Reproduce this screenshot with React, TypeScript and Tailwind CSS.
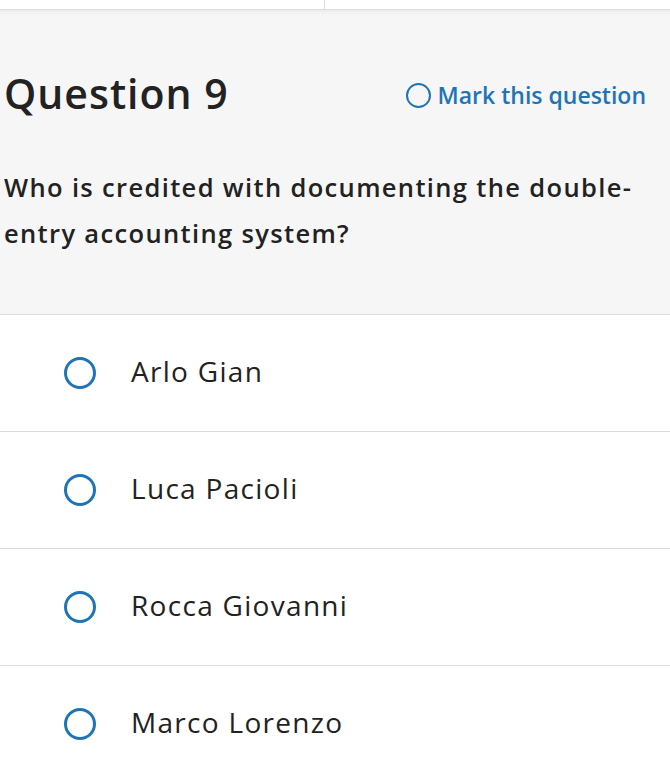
import React from "react";

const options = ["Arlo Gian", "Luca Pacioli", "Rocca Giovanni", "Marco Lorenzo"];

export default function App() {
  return (
    <div className="w-[670px] h-[779px] overflow-hidden bg-white text-[#222222]" style={{ fontFamily: "'Open Sans', Lato, sans-serif" }}>
      <div className="flex h-[9px] bg-white">
        <div className="w-[325px] border-r border-[#dcdcdc]" />
        <div className="flex-1" />
      </div>
      <div className="h-[1px] bg-[#dcdcdc]" />
      <div className="h-[304px] bg-[#f6f6f6] bg-gradient-to-b from-[#ececec] to-[#f6f6f6] bg-no-repeat bg-[length:100%_5px]">
        <div className="pl-[4px] pr-[24px] pt-[58px] flex items-center justify-between">
          <h1 className="text-[41px] font-semibold leading-[50px] tracking-[1px]">Question 9</h1>
          <button className="flex items-center gap-[7px] text-[#1f74b6] text-[23px] font-semibold leading-none mt-[4px]">
            <span className="w-[25px] h-[25px] rounded-full border-[2.5px] border-[#1f74b6]" />
            <span>Mark this question</span>
          </button>
        </div>
        <p className="pl-[4px] pr-[20px] pt-[46px] text-[25.5px] font-semibold leading-[46px] tracking-[1.35px]">
          Who is credited with documenting the double-entry accounting system?
        </p>
      </div>
      <div className="border-t border-[#dcdcdc]">
        {options.map((o) => (
          <div key={o} className="h-[117px] border-b border-[#dcdcdc] flex items-center">
            <span className="ml-[64px] w-[32px] h-[32px] rounded-full border-[3px] border-[#1f74b6]" />
            <span className="ml-[35px] text-[28px] leading-none tracking-[1.3px] -mt-[4px]">{o}</span>
          </div>
        ))}
      </div>
    </div>
  );
}
